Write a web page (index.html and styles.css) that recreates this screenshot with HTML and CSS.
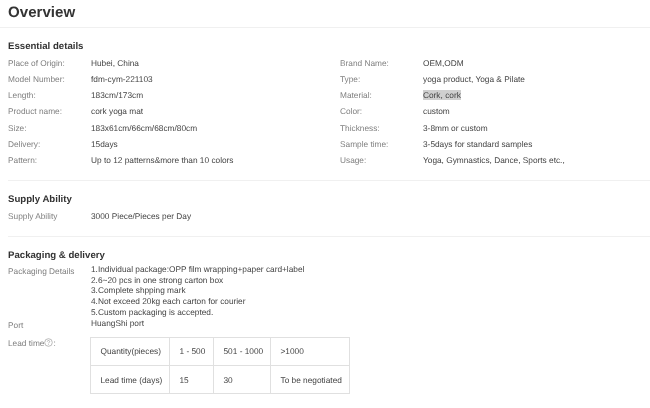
FILE: index.html
```html
<!DOCTYPE html>
<html lang="en">
<head>
<meta charset="utf-8">
<title>Overview</title>
<link rel="stylesheet" href="styles.css">
</head>
<body>
<h1 class="title">Overview</h1>
<section class="section first">
  <h2 class="heading">Essential details</h2>
  <div class="attrs">
    <div class="attr"><span class="label">Place of Origin:</span><span class="value">Hubei, China</span></div>
    <div class="attr right"><span class="label">Brand Name:</span><span class="value">OEM,ODM</span></div>
    <div class="attr"><span class="label">Model Number:</span><span class="value">fdm-cym-221103</span></div>
    <div class="attr right"><span class="label">Type:</span><span class="value">yoga product, Yoga &amp; Pilate</span></div>
    <div class="attr"><span class="label">Length:</span><span class="value">183cm/173cm</span></div>
    <div class="attr right"><span class="label">Material:</span><span class="value"><mark class="selected">Cork, cork</mark></span></div>
    <div class="attr"><span class="label">Product name:</span><span class="value">cork yoga mat</span></div>
    <div class="attr right"><span class="label">Color:</span><span class="value">custom</span></div>
    <div class="attr"><span class="label">Size:</span><span class="value">183x61cm/66cm/68cm/80cm</span></div>
    <div class="attr right"><span class="label">Thickness:</span><span class="value">3-8mm or custom</span></div>
    <div class="attr"><span class="label">Delivery:</span><span class="value">15days</span></div>
    <div class="attr right"><span class="label">Sample time:</span><span class="value">3-5days for standard samples</span></div>
    <div class="attr"><span class="label">Pattern:</span><span class="value">Up to 12 patterns&amp;more than 10 colors</span></div>
    <div class="attr right"><span class="label">Usage:</span><span class="value">Yoga, Gymnastics, Dance, Sports etc.,</span></div>
  </div>
</section>
<section class="section supply">
  <h2 class="heading">Supply Ability</h2>
  <div class="attr"><span class="label">Supply Ability</span><span class="value">3000 Piece/Pieces per Day</span></div>
</section>
<section class="section packaging">
  <h2 class="heading">Packaging &amp; delivery</h2>
  <div class="pack-row details">
    <span class="label pack-label">Packaging Details</span>
    <div class="value lines">1.Individual package:OPP film wrapping+paper card+label<br>2.6~20 pcs in one strong carton box<br>3.Complete shpping mark<br>4.Not exceed 20kg each carton for courier<br>5.Custom packaging is accepted.</div>
  </div>
  <div class="pack-row">
    <span class="label port-label">Port</span>
    <div class="value lines">HuangShi port</div>
  </div>
  <div class="pack-row lead">
    <span class="label lead-label">Lead time<svg class="help" width="9" height="9" viewBox="0 0 9 9" aria-hidden="true"><circle cx="4.5" cy="4.5" r="3.8" fill="none" stroke="#aaa" stroke-width=".8"/><path d="M3.3 3.6c0-1.5 2.4-1.5 2.4 0 0 .9-1.2.9-1.2 1.8M4.5 6.2v.7" fill="none" stroke="#999" stroke-width=".7"/></svg>:</span>
    <table class="lead-table">
      <tr><td class="c1">Quantity(pieces)</td><td class="c2">1 - 500</td><td class="c3">501 - 1000</td><td class="c4">&gt;1000</td></tr>
      <tr><td>Lead time (days)</td><td>15</td><td>30</td><td>To be negotiated</td></tr>
    </table>
  </div>
</section>
</body>
</html>
```
FILE: styles.css
```css
html, body {
  margin: 0;
  padding: 0;
  background: #fff;
}
body {
  width: 650px;
  height: 408px;
  overflow: hidden;
  font-family: "Liberation Sans", Arial, sans-serif;
  font-size: 8.3px;
  text-rendering: geometricPrecision;
  color: #444;
  filter: blur(.3px);
}
.title {
  margin: 0;
  padding: 4px 0 0 8px;
  height: 28px;
  box-sizing: border-box;
  border-bottom: 1px solid #f0f0f0;
  font-size: 15.1px;
  line-height: 18px;
  font-weight: 700;
  color: #333;
}
.section {
  margin-left: 8px;
  border-bottom: 1px solid #f0f0f0;
}
.first {
  height: 153px;
  padding-top: 12px;
  box-sizing: border-box;
}
.supply {
  height: 56px;
  padding-top: 12px;
  box-sizing: border-box;
}
.packaging {
  border-bottom: 0;
  padding-top: 12px;
}
.heading {
  margin: 0;
  font-size: 9.65px;
  line-height: 13px;
  font-weight: 700;
  color: #333;
}
.attrs {
  display: grid;
  grid-template-columns: 332px 1fr;
  margin-top: 2px;
}
.attr {
  display: flex;
  height: 16.15px;
  line-height: 16.15px;
}
.supply .attr {
  margin-top: 2px;
}
.label {
  flex: none;
  width: 83px;
  color: #808080;
}
.value {
  color: #444;
  white-space: nowrap;
}
.selected {
  background: #cfcfcf;
  color: #444;
}
.pack-row {
  display: flex;
}
.details {
  margin-top: 2px;
}
.pack-label {
  padding-top: 1px;
  line-height: 12px;
}
.lines {
  line-height: 10.7px;
}
.port-label {
  line-height: 12px;
  padding-top: 1px;
}
.lead {
  margin-top: 5px;
  align-items: flex-start;
}
.lead-label {
  line-height: 12px;
  padding-top: 1px;
}
.help {
  vertical-align: -1.5px;
}
.lead-table {
  border-collapse: collapse;
  width: 259px;
  table-layout: fixed;
  margin: 1px 0 0 -1px;
}
.lead-table td {
  border: 1px solid #e0e0e0;
  height: 28.4px;
  padding: 0 0 0 9.5px;
  box-sizing: border-box;
  color: #444;
  white-space: nowrap;
}
.c1 { width: 79px; }
.c2 { width: 44px; }
.c3 { width: 57px; }
.c4 { width: 79px; }
```
